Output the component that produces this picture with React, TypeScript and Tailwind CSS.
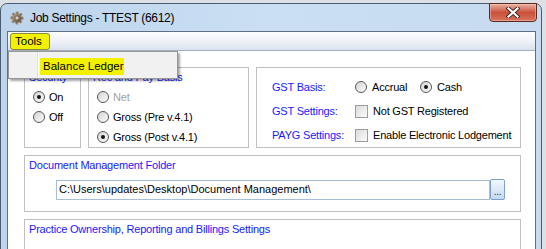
import React from "react";

const ui = "font-['Liberation_Sans',Arial,sans-serif]";

function Gear() {
  const teeth = [0, 45, 90, 135, 180, 225, 270, 315];
  return (
    <svg width="14" height="14" viewBox="0 0 14 14" className="shrink-0">
      <defs>
        <linearGradient id="gearFill" x1="0" y1="0" x2="1" y2="1">
          <stop offset="0" stopColor="#b8a48a" />
          <stop offset="1" stopColor="#5e4d3b" />
        </linearGradient>
      </defs>
      {teeth.map((a) => (
        <rect
          key={a}
          x="5.6"
          y="0.4"
          width="2.8"
          height="3.4"
          rx="0.5"
          fill="url(#gearFill)"
          transform={`rotate(${a} 7 7)`}
        />
      ))}
      <circle cx="7" cy="7" r="4.6" fill="url(#gearFill)" />
      <circle cx="7" cy="7" r="2" fill="#d9d2c7" />
      <circle cx="7" cy="7" r="2" fill="none" stroke="#4d3f31" strokeWidth="0.6" />
    </svg>
  );
}

function CloseButton() {
  return (
    <div className="-mt-[1px] flex h-[19px] w-[48px] items-center justify-center rounded-b-[4px] border border-[#5a2a22] bg-gradient-to-b from-[#eab1a4] via-[#c9503a] to-[#d9735c] shadow-[inset_0_0_0_1px_rgba(255,210,200,0.45)]">
      <svg width="14" height="11" viewBox="0 0 14 11">
        <path d="M2.5 1.5 L11.5 9.5 M11.5 1.5 L2.5 9.5" stroke="#3b2520" strokeWidth="4" strokeLinecap="square" />
        <path d="M2.5 1.5 L11.5 9.5 M11.5 1.5 L2.5 9.5" stroke="#ffffff" strokeWidth="2.2" strokeLinecap="square" />
      </svg>
    </div>
  );
}

function Radio({ checked }: { checked?: boolean }) {
  return (
    <span className="flex h-[12px] w-[12px] shrink-0 items-center justify-center rounded-full border border-[#55595e] bg-gradient-to-br from-[#d4d4d4] to-[#fcfcfc]">
      {checked && <span className="h-[4px] w-[4px] rounded-full bg-[#161616]" />}
    </span>
  );
}

function Check() {
  return (
    <span className="h-[13px] w-[13px] shrink-0 border border-[#9c9c9c] bg-gradient-to-br from-[#dcdcdc] to-[#fafafa]" />
  );
}

function RadioRow({
  label,
  checked,
  disabled,
}: {
  label: string;
  checked?: boolean;
  disabled?: boolean;
}) {
  return (
    <div className="flex h-[20px] items-center gap-[4px] pl-[8px]">
      <Radio checked={checked} />
      <span className={disabled ? "text-[#a3a3a3]" : "text-black"}>{label}</span>
    </div>
  );
}

export default function App() {
  return (
    <div className="h-[249px] w-[546px] overflow-hidden bg-[#dde1e6]">
      {/* window */}
      <div className="mt-[3px] w-[542px] rounded-t-[7px] border border-[#4b5c72] bg-gradient-to-r from-[#bdd4ec] via-[#cadff3] to-[#c6dbf0]">
        {/* title bar */}
        <div className="flex h-[27px] items-start justify-between pr-[4px]">
          <div className="flex h-full items-center gap-[6px] pl-[9px]">
            <Gear />
            <span className={`${ui} text-[12px] tracking-[-0.3px] text-black`}>
              Job Settings - TTEST (6612)
            </span>
          </div>
          <CloseButton />
        </div>

        <div className="pl-[6px] pr-[5px]">
          {/* client area */}
          <div className="relative h-[240px] border border-[#5f6e82] bg-white">
            {/* menu bar */}
            <div className="h-[19px] border-b border-[#a3adbd] bg-gradient-to-b from-[#fdfdfe] via-[#eef1f7] to-[#dbe2ee] pl-[2px] pt-[1px]">
              <div
                className={`${ui} flex h-[17px] w-[40px] items-center rounded-[3px] border border-[#8a8a3a] bg-[#f2f200] pl-[4px] text-[11.5px] text-black`}
              >
                Tools
              </div>
            </div>

            {/* dropdown */}
            <div className="absolute left-0 top-[19px] z-10 flex h-[28px] w-[170px] border border-[#979797] bg-[#f1f1f1] shadow-[2px_2px_2px_rgba(0,0,0,0.35)]">
              <div className="w-[29px] border-r border-[#e0e0e0]" />
              <div className="w-px bg-white" />
              <div className="pl-[1px] pt-[6px]">
                <div className={`${ui} flex h-[17px] w-[84px] items-center bg-[#f2f200] pl-[3px] text-[11.5px] text-black`}>
                  Balance Ledger
                </div>
              </div>
            </div>

            {/* form */}
            <div className={`${ui} flex flex-col gap-[7px] pl-[16px] pt-[16px] text-[11px] tracking-[-0.2px]`}>
              <div className="flex gap-[7px]">
                <div className="h-[81px] w-[57px] border border-[#c0c0c0]">
                  <div className="mt-[2px] flex h-[14px] items-center pl-[4px] text-[#1a1aff]">Security</div>
                  <div className="mt-[3px]">
                    <RadioRow label="On" checked />
                    <RadioRow label="Off" />
                  </div>
                </div>
                <div className="h-[81px] w-[161px] border border-[#c0c0c0]">
                  <div className="mt-[2px] flex h-[14px] items-center pl-[4px] text-[#1a1aff]">Rec and Pay Basis</div>
                  <div className="mt-[3px]">
                    <RadioRow label="Net" disabled />
                    <RadioRow label="Gross (Pre v.4.1)" />
                    <RadioRow label="Gross (Post v.4.1)" checked />
                  </div>
                </div>
                <div className="h-[81px] w-[265px] border border-[#c0c0c0] pl-[15px] pt-[7px]">
                  <div className="flex h-[24px] items-center">
                    <span className="w-[83px] text-[#1a1aff]">GST Basis:</span>
                    <Radio />
                    <span className="ml-[5px] w-[48px]">Accrual</span>
                    <Radio checked />
                    <span className="ml-[5px]">Cash</span>
                  </div>
                  <div className="flex h-[24px] items-center">
                    <span className="w-[83px] text-[#1a1aff]">GST Settings:</span>
                    <Check />
                    <span className="ml-[5px]">Not GST Registered</span>
                  </div>
                  <div className="flex h-[24px] items-center">
                    <span className="w-[83px] text-[#1a1aff]">PAYG Settings:</span>
                    <Check />
                    <span className="ml-[5px]">Enable Electronic Lodgement</span>
                  </div>
                </div>
              </div>

              <div className="h-[57px] w-[497px] border border-[#c0c0c0]">
                <div className="mt-[2px] flex h-[14px] items-center pl-[4px] text-[#1a1aff]">
                  Document Management Folder
                </div>
                <div className="ml-[31px] mt-[7px] flex items-center">
                  <div className="flex h-[20px] w-[434px] items-center border border-[#a7bed8] pl-[2px] tracking-normal text-black">
                    C:\Users\updates\Desktop\Document Management\
                  </div>
                  <div className="flex h-[21px] w-[15px] items-end justify-center rounded-[2px] border border-[#7d9fcb] bg-gradient-to-b from-[#f3f8fd] via-[#dce9f7] to-[#c4d8ef] pb-[3px] text-[10px] leading-[8px] text-[#333]">
                    ...
                  </div>
                </div>
              </div>

              <div className="h-[60px] w-[497px] border border-[#c0c0c0]">
                <div className="mt-[2px] flex h-[14px] items-center pl-[4px] text-[#1a1aff]">
                  Practice Ownership, Reporting and Billings Settings
                </div>
              </div>
            </div>
          </div>
        </div>
      </div>
    </div>
  );
}
